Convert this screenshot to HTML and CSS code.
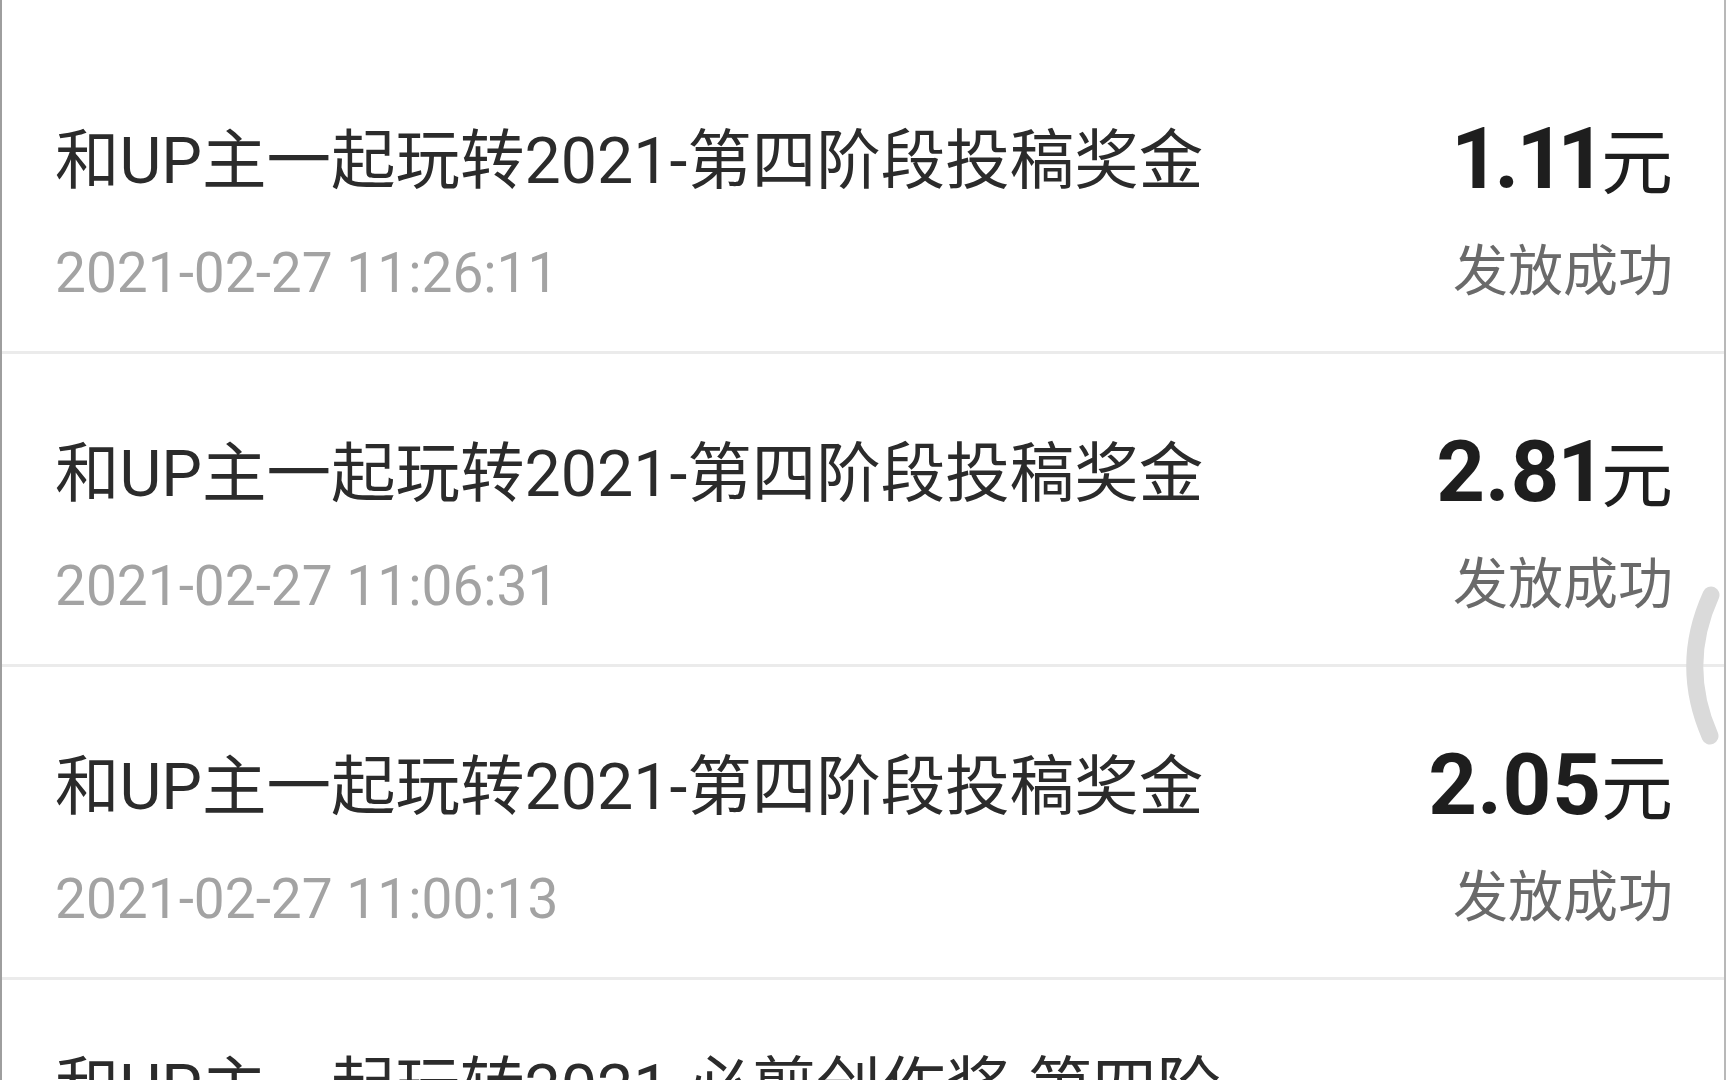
FILE: index.html
```html
<!DOCTYPE html>
<html lang="zh-CN">
<head>
<meta charset="utf-8">
<title>收益明细</title>
<link rel="stylesheet" href="styles.css">
</head>
<body>
<div class="page">
  <ul class="list">
    <li class="row">
      <div class="info">
        <div class="title">和UP主一起玩转2021-第四阶段投稿奖金</div>
        <div class="date">2021-02-27 11:26:11</div>
      </div>
      <div class="side">
        <div class="amount">1.11<span class="unit">元</span></div>
        <div class="status">发放成功</div>
      </div>
    </li>
    <li class="row">
      <div class="info">
        <div class="title">和UP主一起玩转2021-第四阶段投稿奖金</div>
        <div class="date">2021-02-27 11:06:31</div>
      </div>
      <div class="side">
        <div class="amount">2.81<span class="unit">元</span></div>
        <div class="status">发放成功</div>
      </div>
    </li>
    <li class="row">
      <div class="info">
        <div class="title">和UP主一起玩转2021-第四阶段投稿奖金</div>
        <div class="date">2021-02-27 11:00:13</div>
      </div>
      <div class="side">
        <div class="amount">2.05<span class="unit">元</span></div>
        <div class="status">发放成功</div>
      </div>
    </li>
    <li class="row row-wrap">
      <div class="info">
        <div class="title">和UP主一起玩转2021-必剪创作奖-第四阶段投稿奖金</div>
        <div class="date">2021-02-27 10:58:42</div>
      </div>
      <div class="side">
        <div class="amount">3.20<span class="unit">元</span></div>
        <div class="status">发放成功</div>
      </div>
    </li>
  </ul>
  <svg class="scroll-glow" width="40" height="170" viewBox="0 0 40 170" aria-hidden="true">
    <path d="M28 15 Q-4 85 27 156" fill="none" stroke="#dadada" stroke-width="17" stroke-linecap="round"/>
  </svg>
</div>
</body>
</html>
```

FILE: styles.css
```css
html, body {
  margin: 0;
  padding: 0;
  background: #ffffff;
}

body {
  font-family: Roboto, "Noto Sans CJK SC", sans-serif;
  overflow: hidden;
}

.page {
  position: relative;
  height: 1080px;
  margin-right: 2px;
  border-left: 2px solid #9e9e9e;
  border-right: 2px solid #b8b8b8;
  box-sizing: border-box;
  overflow: hidden;
  padding-top: 41px;
}

.list {
  list-style: none;
  margin: 0;
  padding: 0;
}

.row {
  display: flex;
  align-items: flex-start;
  justify-content: space-between;
  gap: 190px;
  padding: 80px 51px 42px 53px;
  border-bottom: 3px solid #ebebeb;
}

.row-wrap {
  padding-top: 68px;
  align-items: center;
}

.info {
  flex: 1;
  min-width: 0;
}

.title {
  height: 80px;
  font-size: 64.5px;
  line-height: 80px;
  color: #2b2b2b;
}

.row-wrap .title {
  height: auto;
}

.date {
  height: 72px;
  margin-top: 36px;
  font-size: 55px;
  line-height: 72px;
  color: #a3a3a3;
}

.side {
  flex-shrink: 0;
  text-align: right;
}

.amount {
  height: 80px;
  font-size: 85px;
  line-height: 76px;
  font-weight: 700;
  color: #1e1e1e;
  font-variant-numeric: proportional-nums;
  white-space: nowrap;
}

.unit {
  font-family: "Noto Sans CJK SC", sans-serif;
  font-weight: 400;
  font-size: 72px;
  line-height: 1;
}

.status {
  height: 72px;
  margin-top: 36px;
  font-size: 55px;
  line-height: 68px;
  color: #6a6a6a;
  white-space: nowrap;
}

.scroll-glow {
  position: absolute;
  left: 1681px;
  top: 580px;
}
```
